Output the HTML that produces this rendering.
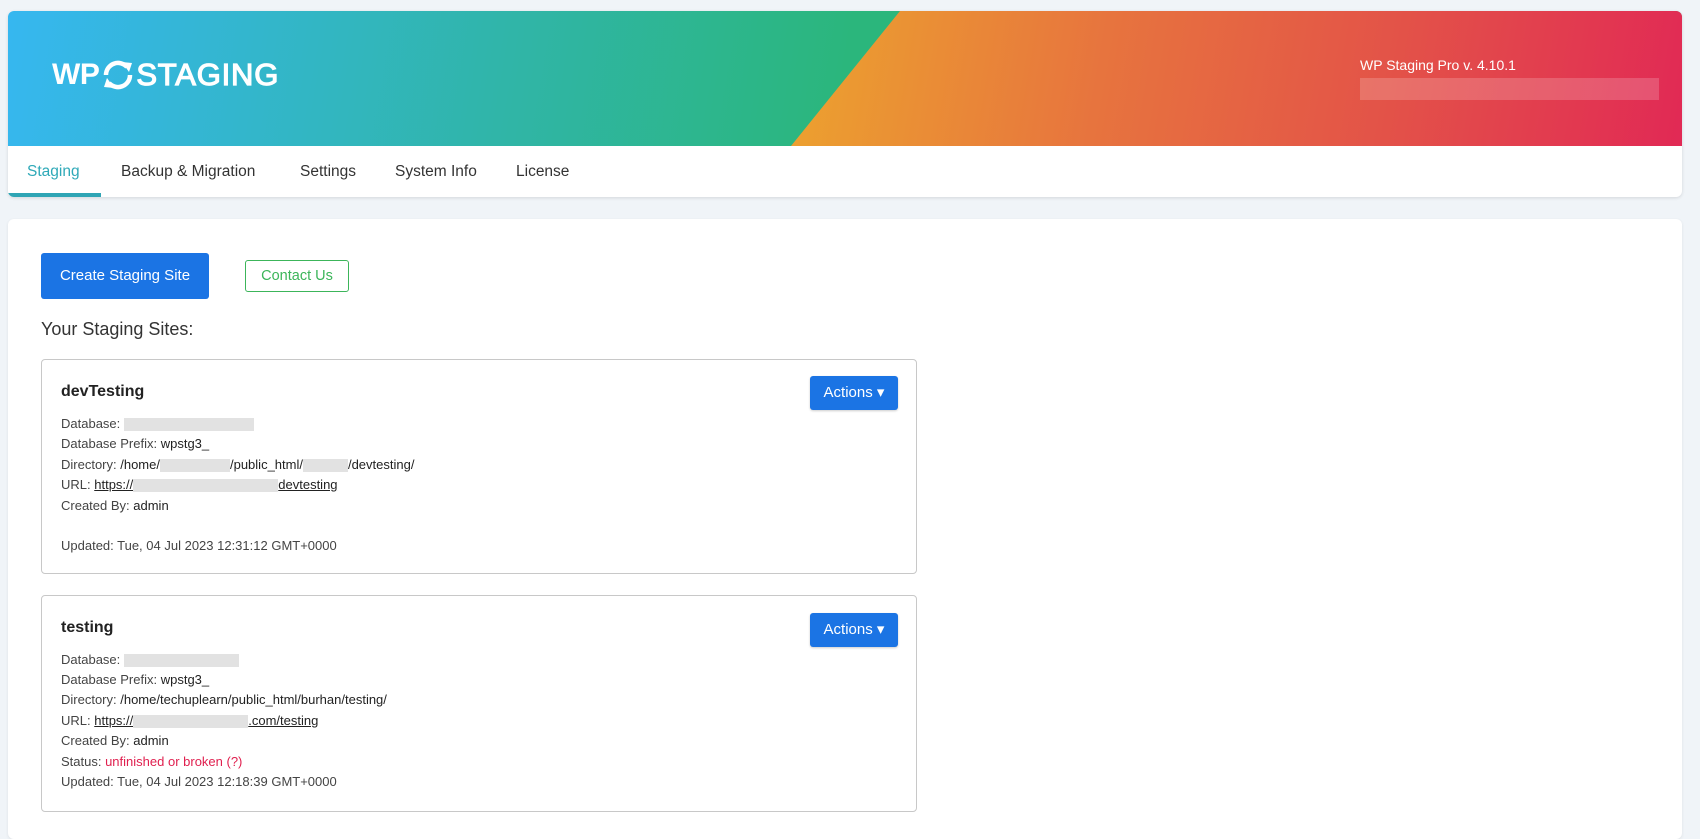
<!DOCTYPE html>
<html><head><meta charset="utf-8"><style>
*{margin:0;padding:0;box-sizing:border-box}
body{width:1700px;height:820px;overflow:hidden;background:#f0f4f8;font-family:"Liberation Sans",sans-serif;color:#333;position:relative}
.abs{position:absolute}
.hdr{left:8px;top:11px;width:1674px;height:186px;border-radius:6px;overflow:hidden;background:#fff;box-shadow:0 1px 3px rgba(0,0,0,.12)}
.grad{position:absolute;left:0;top:0;width:100%;height:135px;background:linear-gradient(100deg,#36b7f0 0%,#30b5a8 30%,#2bb67c 50%)}
.orange{position:absolute;left:0;top:0;width:100%;height:135px;background:linear-gradient(100deg,#eca12f 47%,#e7743e 65%,#e35348 82%,#e12955 100%);clip-path:polygon(892px 0,100% 0,100% 100%,783px 100%)}
.nav{position:absolute;top:135px;height:51px;width:100%;font-size:15.5px;color:#333}
.nav span{position:absolute;top:17px}
.main{left:8px;top:219px;width:1674px;height:620px;background:#fff;border-radius:6px;box-shadow:0 1px 3px rgba(0,0,0,.08)}
.card{position:absolute;left:41px;width:876px;border:1px solid #c8c8c8;border-radius:4px;background:#fff}
.card .t{position:absolute;left:19px;font-weight:bold;font-size:16px;color:#222}
.card .l{position:absolute;left:19px;font-size:13px;color:#444;white-space:nowrap}
.card b{font-weight:normal;color:#222}
.blur{display:inline-block;background:#e2e2e2;height:13px;vertical-align:middle}
.act{position:absolute;right:18px;width:88px;height:34px;background:#1b74e4;color:#fff;border-radius:3px;font-size:15px;line-height:34px;text-align:center;box-shadow:0 1px 2px rgba(0,0,0,.2)}
u{text-decoration:underline}
</style></head><body>
<div class="abs hdr">
 <div class="grad"></div><div class="orange"></div>
 <div class="abs" style="left:44px;top:46px;color:#fff;font-weight:bold;font-size:30px;letter-spacing:-0.5px;display:flex;align-items:center">WP<svg width="36" height="34" viewBox="0 0 36 34" style="margin:0 0 0 1px"><path d="M6 17a12 12 0 0 1 21-8" stroke="#fff" stroke-width="4.5" fill="none"/><path d="M30 17a12 12 0 0 1-21 8" stroke="#fff" stroke-width="4.5" fill="none"/><path d="M22 4l10 1-3 9z" fill="#fff"/><path d="M14 30l-10-1 3-9z" fill="#fff"/></svg><span style="font-weight:normal;font-size:31px;letter-spacing:0.8px;-webkit-text-stroke:1.2px #fff">STAGING</span></div>
 <div class="abs" style="left:1352px;top:46px;color:#fff;font-size:14px">WP Staging Pro v. 4.10.1</div>
 <div class="abs" style="left:1352px;top:67px;width:299px;height:22px;background:rgba(255,255,255,.18)"></div>
 <div class="nav">
  <span style="left:19px;color:#2fa9b8">Staging</span>
  <span style="left:113px">Backup &amp; Migration</span>
  <span style="left:292px">Settings</span>
  <span style="left:387px">System Info</span>
  <span style="left:508px">License</span>
  <div class="abs" style="left:0;top:47px;width:93px;height:4px;background:#2fa5b5"></div>
 </div>
</div>
<div class="abs main"></div>
<div class="abs" style="left:41px;top:253px;width:168px;height:46px;background:#1b74e4;color:#fff;border-radius:3px;font-size:15px;line-height:46px;text-align:center">Create Staging Site</div>
<div class="abs" style="left:245px;top:260px;width:104px;height:32px;border:1px solid #3cb55a;color:#3cb55a;border-radius:3px;font-size:14.5px;line-height:30px;text-align:center">Contact Us</div>
<div class="abs" style="left:41px;top:319px;font-size:18px;color:#333">Your Staging Sites:</div>
<div class="card" style="top:359px;height:215px">
 <div class="t" style="top:23px">devTesting</div>
 <div class="act" style="top:16px">Actions ▾</div>
 <div class="l" style="top:56px">Database: <span class="blur" style="width:130px"></span></div>
 <div class="l" style="top:76px">Database Prefix: <b>wpstg3_</b></div>
 <div class="l" style="top:97px">Directory: <b>/home/<span class="blur" style="width:70px"></span>/public_html/<span class="blur" style="width:45px"></span>/devtesting/</b></div>
 <div class="l" style="top:117px">URL: <b><u>https://<span class="blur" style="width:145px"></span>devtesting</u></b></div>
 <div class="l" style="top:138px">Created By: <b>admin</b></div>
 <div class="l" style="top:178px">Updated: Tue, 04 Jul 2023 12:31:12 GMT+0000</div>
</div>
<div class="card" style="top:595px;height:217px">
 <div class="t" style="top:23px">testing</div>
 <div class="act" style="top:17px">Actions ▾</div>
 <div class="l" style="top:56px">Database: <span class="blur" style="width:115px"></span></div>
 <div class="l" style="top:76px">Database Prefix: <b>wpstg3_</b></div>
 <div class="l" style="top:96px">Directory: <b>/home/techuplearn/public_html/burhan/testing/</b></div>
 <div class="l" style="top:117px">URL: <b><u>https://<span class="blur" style="width:115px"></span>.com/testing</u></b></div>
 <div class="l" style="top:137px">Created By: <b>admin</b></div>
 <div class="l" style="top:158px">Status: <span style="color:#e0204f">unfinished or broken (?)</span></div>
 <div class="l" style="top:178px">Updated: Tue, 04 Jul 2023 12:18:39 GMT+0000</div>
</div>
</body></html>
